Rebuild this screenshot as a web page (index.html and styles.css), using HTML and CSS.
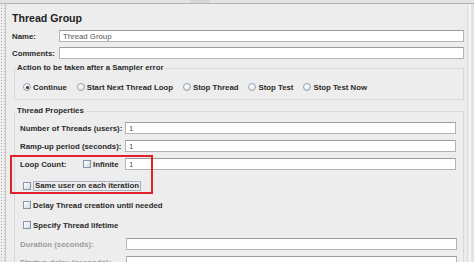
FILE: index.html
```html
<!DOCTYPE html>
<html lang="en">
<head>
    <meta charset="UTF-8">
    <meta name="viewport" content="width=device-width, initial-scale=1.0">
    <title>Thread Group</title>
    <link rel="stylesheet" href="styles.css">
</head>
<body>
    <div class="topbar"></div>
    <div class="frame">
        <div class="splitter"></div>
        <div class="main">
            <h1 class="title">Thread Group</h1>
            <div class="row">
                <label class="lbl name-lbl">Name:</label>
                <input class="field" type="text" value="Thread Group">
            </div>
            <div class="row row-comments">
                <label class="lbl name-lbl">Comments:</label>
                <input class="field" type="text" value="">
            </div>

            <fieldset class="group group-action">
                <legend>Action to be taken after a Sampler error</legend>
                <div class="radios">
                    <span class="opt"><span class="radio on"></span>Continue</span>
                    <span class="opt"><span class="radio"></span>Start Next Thread Loop</span>
                    <span class="opt"><span class="radio"></span>Stop Thread</span>
                    <span class="opt"><span class="radio"></span>Stop Test</span>
                    <span class="opt"><span class="radio"></span>Stop Test Now</span>
                </div>
            </fieldset>

            <fieldset class="group group-props">
                <legend>Thread Properties</legend>
                <div class="props">
                    <div class="prop-row">
                        <label class="lbl prop-lbl">Number of Threads (users):</label>
                        <input class="field" type="text" value="1">
                    </div>
                    <div class="prop-row gap6">
                        <label class="lbl prop-lbl">Ramp-up period (seconds):</label>
                        <input class="field" type="text" value="1">
                    </div>
                    <div class="prop-row gap6">
                        <label class="lbl loop-lbl">Loop Count:</label>
                        <span class="inline-check"><span class="check"></span>Infinite</span>
                        <input class="field" type="text" value="1">
                    </div>
                    <div class="check-row first-check">
                        <span class="check"></span><span class="focused">Same user on each iteration</span>
                    </div>
                    <div class="check-row gap9">
                        <span class="check"></span>Delay Thread creation until needed
                    </div>
                    <div class="check-row gap10">
                        <span class="check"></span>Specify Thread lifetime
                    </div>
                    <div class="prop-row gap8">
                        <label class="lbl prop-lbl muted">Duration (seconds):</label>
                        <input class="field field-wide" type="text" value="">
                    </div>
                    <div class="prop-row gap6">
                        <label class="lbl prop-lbl muted">Startup delay (seconds):</label>
                        <input class="field field-wide" type="text" value="">
                    </div>
                </div>
            </fieldset>

            <div class="highlight"></div>
        </div>
        <div class="sidebar"></div>
    </div>
</body>
</html>
```

FILE: styles.css
```css
html, body {
    margin: 0;
    height: 100%;
    overflow: hidden;
}
body {
    background: #ededed;
    font-family: "Liberation Sans", Arial, sans-serif;
    font-size: 7.8px;
    color: #2a2a2a;
}
.topbar {
    height: 3px;
    background: linear-gradient(90deg, #e2e2e2 0, #e2e2e2 40%, #d6d6d6 40%, #d6d6d6 44%, #e2e2e2 44%);
    border-bottom: 1px solid #b4b4b4;
}
.frame {
    display: flex;
    height: 258px;
}
.splitter {
    width: 5px;
    border-right: 1px solid #c9c9c9;
    background: radial-gradient(circle, #b9b9b9 0.6px, transparent 0.8px) 0 0 / 3px 3px;
}
.main {
    position: relative;
    width: 452px;
    padding: 0 2px 0 6px;
}
.title {
    margin: 6px 0 0;
    height: 16px;
    line-height: 16px;
    font-size: 10.6px;
    font-weight: bold;
    color: #222;
}
.row {
    display: flex;
    align-items: center;
    height: 12px;
    margin-top: 4px;
}
.row-comments {
    margin-top: 5px;
}
.lbl {
    font-weight: bold;
    white-space: nowrap;
}
.name-lbl {
    width: 47px;
    flex: none;
}
.field {
    flex: 1;
    min-width: 0;
    box-sizing: border-box;
    height: 12px;
    margin: 0;
    padding: 0 3px;
    border: 1px solid #b4b4b4;
    border-top-color: #9c9c9c;
    background: #fff;
    font-family: "Liberation Sans", Arial, sans-serif;
    font-size: 7.8px;
    color: #555;
    outline: none;
}
.group {
    margin: 4px 0 0 2px;
    padding: 0;
    border: 1px solid #d4d9df;
    min-width: 0;
}
.group legend {
    padding: 0 2px;
    margin-left: 0;
    line-height: 10px;
    font-weight: bold;
}
.group-props {
    margin-top: 6px;
    border-bottom: none;
}
.radios {
    display: flex;
    align-items: center;
    gap: 10px;
    height: 10px;
    padding: 9px 0 7px 8px;
    font-weight: bold;
}
.opt {
    display: flex;
    align-items: center;
}
.radio {
    width: 8px;
    height: 8px;
    box-sizing: border-box;
    margin-right: 2px;
    border: 1px solid #98a6b4;
    border-radius: 50%;
    background: radial-gradient(circle at 40% 35%, #ffffff 0, #e6ebf1 55%, #c9d3de 100%);
    position: relative;
}
.radio.on::after {
    content: "";
    position: absolute;
    left: 1.5px;
    top: 1.5px;
    width: 3px;
    height: 3px;
    border-radius: 50%;
    background: #333;
}
.props {
    padding: 6px 7px 20px 5px;
}
.prop-row {
    display: flex;
    align-items: center;
    height: 12px;
}
.prop-lbl {
    width: 105px;
    flex: none;
}
.loop-lbl {
    width: 63px;
    flex: none;
}
.inline-check {
    display: flex;
    align-items: center;
    width: 42px;
    flex: none;
    font-weight: bold;
}
.check {
    flex: none;
    width: 8px;
    height: 8px;
    box-sizing: border-box;
    margin-right: 2px;
    border: 1px solid #8796a6;
    background: linear-gradient(135deg, #ffffff 0, #e3e9f0 60%, #cdd6e0 100%);
}
.check-row {
    display: flex;
    align-items: center;
    height: 10px;
    padding-left: 3px;
    font-weight: bold;
}
.first-check {
    margin-top: 11px;
}
.focused {
    border: 1px solid #a7b3c2;
    padding: 0 1px;
    line-height: 8px;
}
.gap6 { margin-top: 6px; }
.gap8 { margin-top: 8px; }
.gap9 { margin-top: 9px; }
.gap10 { margin-top: 10px; }
.muted {
    color: #9c9c9c;
}
.field-wide {
    margin-left: 1px;
    margin-right: -1px;
}
.highlight {
    position: absolute;
    left: 4px;
    top: 151px;
    width: 139px;
    height: 35px;
    border: 2px solid #e2202b;
}
.sidebar {
    flex: 1;
    border-left: 3px solid #e6e6e6;
    background: linear-gradient(90deg, #f6f6f6 0, #f6f6f6 2px, #e3e3e3 2px);
}
```
